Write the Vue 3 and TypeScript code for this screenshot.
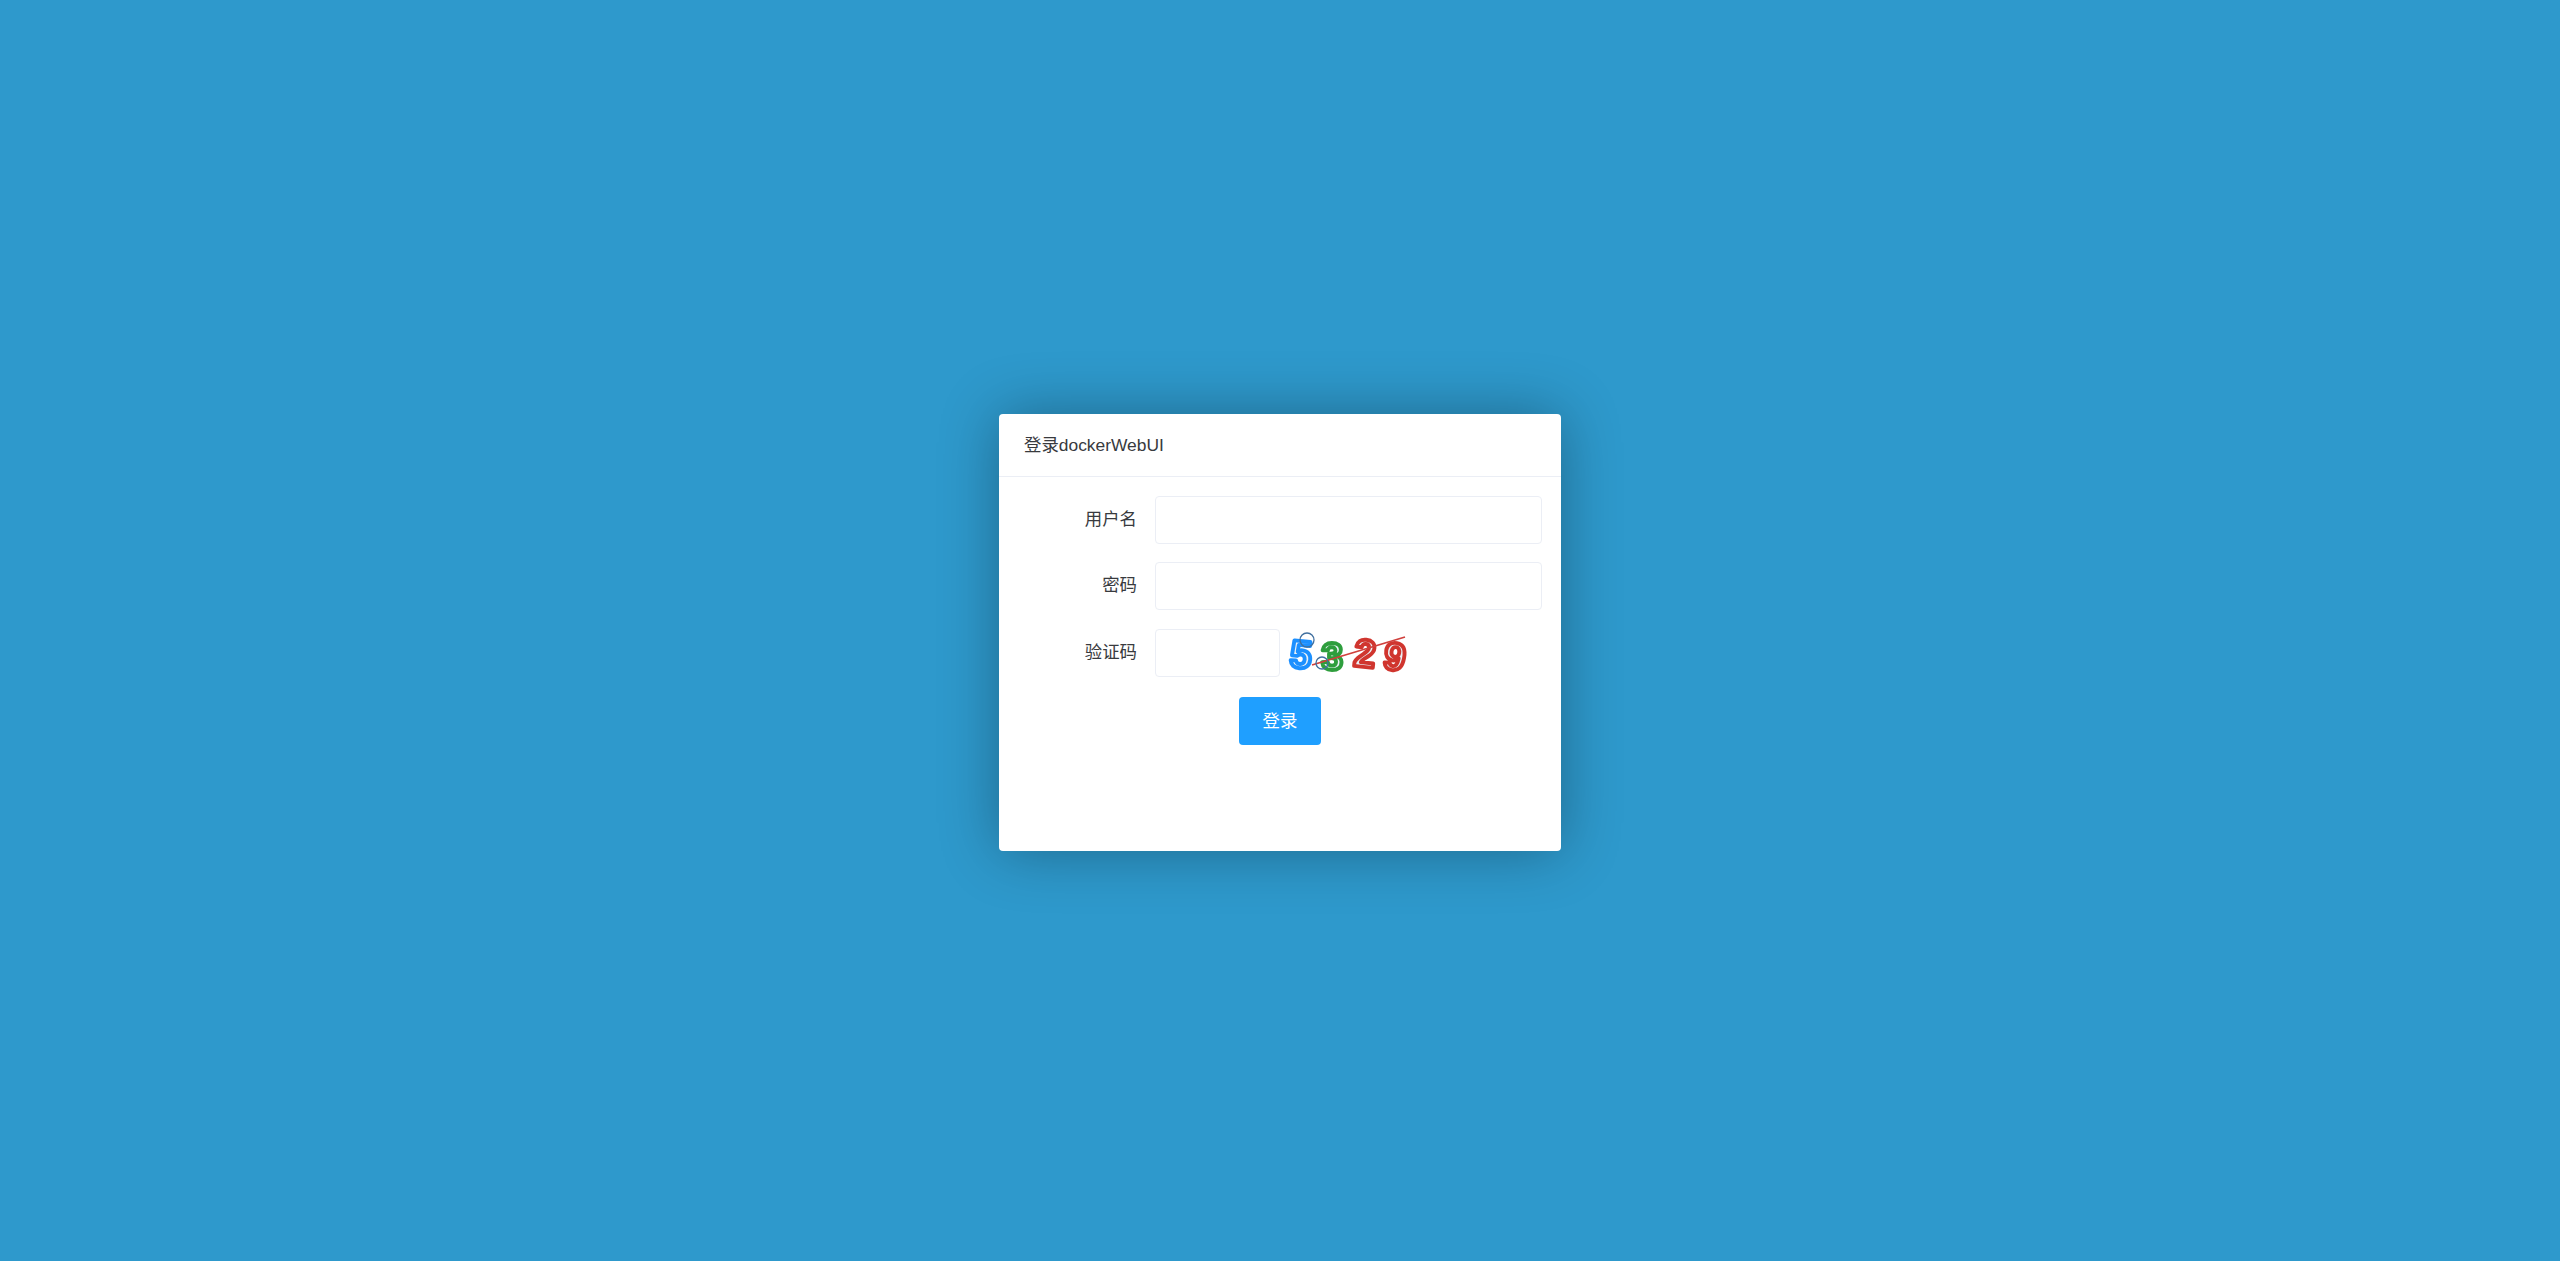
<script setup lang="ts">
const digits = [
  { ch: '5', x: 13, y: 39, color: '#1e90ff', rot: 6 },
  { ch: '3', x: 44, y: 41, color: '#2f9e3c', rot: 0 },
  { ch: '2', x: 77, y: 38, color: '#d0362f', rot: 6 },
  { ch: '9', x: 107, y: 41, color: '#d0362f', rot: 10 },
]
</script>

<template>
  <main class="page">
    <section class="card">
      <header class="card-head">登录dockerWebUI</header>
      <form class="card-body" @submit.prevent>
        <div class="row">
          <label class="label">用户名</label>
          <input class="input" type="text" />
        </div>
        <div class="row">
          <label class="label">密码</label>
          <input class="input" type="password" />
        </div>
        <div class="row">
          <label class="label">验证码</label>
          <input class="input captcha-input" type="text" />
          <svg class="captcha" width="128" height="48" viewBox="0 0 128 48" aria-label="验证码图片">
            <defs>
              <filter id="soft" x="-10%" y="-10%" width="120%" height="120%">
                <feGaussianBlur stdDeviation="0.4" />
              </filter>
            </defs>
            <g filter="url(#soft)">
              <text
                v-for="d in digits"
                :key="d.ch"
                class="digit"
                :x="d.x"
                :y="d.y"
                :stroke="d.color"
                :transform="`rotate(${d.rot} ${d.x} ${d.y - 14})`"
              >{{ d.ch }}</text>
              <line x1="24" y1="36" x2="117" y2="8" stroke="#d0403c" stroke-width="1.8" />
              <circle cx="19" cy="11" r="7" fill="none" stroke="#3f6f9f" stroke-width="1.3" />
              <circle cx="34" cy="34" r="6" fill="none" stroke="#3f6f9f" stroke-width="1.3" />
            </g>
          </svg>
        </div>
        <div class="actions">
          <button class="btn" type="button">登录</button>
        </div>
      </form>
    </section>
  </main>
</template>

<style>
html, body { margin: 0; padding: 0; }
</style>

<style scoped>
.page {
  min-height: 1261px;
  box-sizing: border-box;
  padding-top: 4px;
  background: #2e99cc;
  display: flex;
  align-items: center;
  justify-content: center;
  font-family: "Liberation Sans", "Noto Sans CJK SC", sans-serif;
  font-size: 17.4px;
  color: #383a3e;
}
.card {
  width: 562px;
  height: 437px;
  box-sizing: border-box;
  background: #fff;
  border-radius: 4px;
  box-shadow: 0 0 60px rgba(0, 0, 0, 0.32);
  overflow: hidden;
}
.card-head {
  height: 63px;
  box-sizing: border-box;
  padding: 0 25px 3px;
  display: flex;
  align-items: center;
  border-bottom: 1px solid #ebeef5;
}
.card-body {
  padding: 19px 19px 0 0;
  display: flex;
  flex-direction: column;
  gap: 18.4px;
}
.row {
  display: flex;
  align-items: center;
  height: 48px;
}
.label {
  width: 138px;
  padding: 0 18px 2px 0;
  text-align: right;
  line-height: 46px;
}
.input {
  flex: 1;
  min-width: 0;
  height: 48px;
  box-sizing: border-box;
  border: 1px solid #ebeef5;
  border-radius: 4px;
  background: #fff;
  outline: none;
  padding: 0 18px;
  font: inherit;
}
.captcha-input {
  flex: 0 0 125px;
}
.captcha {
  margin-left: 8px;
  flex: none;
}
.digit {
  font-family: "Liberation Sans", sans-serif;
  font-weight: 700;
  font-size: 39px;
  fill: #eaf1f6;
  text-anchor: middle;
  stroke-width: 3.9;
  stroke-linejoin: round;
}
.actions {
  display: flex;
  justify-content: center;
  padding-left: 19px;
  margin-top: 1.8px;
}
.btn {
  width: 82px;
  height: 48px;
  border: 0;
  border-radius: 4px;
  padding: 0 0 2px;
  background: #1f9fff;
  color: #fff;
  font: inherit;
  cursor: pointer;
}
</style>
